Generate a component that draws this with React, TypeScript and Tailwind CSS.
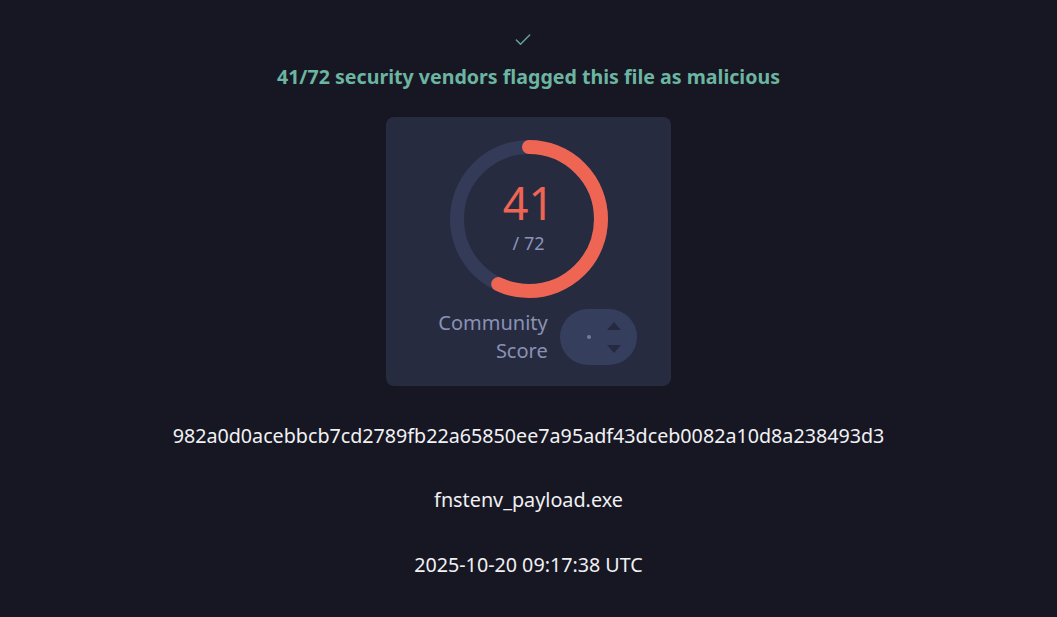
import { Check } from "lucide-react";

const total = 72;
const flagged = 41;

const r = 72;
const circ = 2 * Math.PI * r;

const ScoreRing = () => (
  <div className="relative w-[158px] h-[158px]">
    <svg width="158" height="158" viewBox="0 0 158 158" className="-rotate-90">
      <circle cx="79" cy="79" r={r} fill="none" stroke="#343b58" strokeWidth="14" />
      <circle
        cx="79"
        cy="79"
        r={r}
        fill="none"
        stroke="#ee6554"
        strokeWidth="14"
        strokeLinecap="round"
        strokeDasharray={`${(flagged / total) * circ} ${circ}`}
      />
    </svg>
    <div className="absolute inset-0 flex flex-col items-center pt-[38px]">
      <span className="text-[45px] leading-[50px] text-[#ee6554]">{flagged}</span>
      <span className="mt-[3px] text-[18px] leading-[24px] text-[#8c95b8]">/ {total}</span>
    </div>
  </div>
);

const Votes = () => (
  <div className="w-[77px] h-[56px] rounded-full bg-[#363e5e] flex items-center pl-[27px] gap-[16px]">
    <span className="w-[4px] h-[4px] rounded-full bg-[#727b9c]" />
    <div className="flex flex-col gap-[15px]">
      <span className="w-0 h-0 border-x-[7.5px] border-x-transparent border-b-[8px] border-b-[#252a40]" />
      <span className="w-0 h-0 border-x-[7.5px] border-x-transparent border-t-[8px] border-t-[#252a40]" />
    </div>
  </div>
);

export default function App() {
  return (
    <div className="min-h-screen bg-[#171724] flex flex-col items-center pt-[30px] font-['Noto_Sans',sans-serif]">
      <Check size={20} strokeWidth={1.75} className="text-[#6aa29c] ml-[-12px]" />
      <h1 className="mt-[13px] text-[19.6px] leading-[28px] font-bold text-[#6cb5a0]">
        41/72 security vendors flagged this file as malicious
      </h1>

      <div className="mt-[26px] w-[285px] h-[269px] rounded-lg bg-[#262b40] flex flex-col items-center pt-[23px]">
        <ScoreRing />
        <div className="mt-[11px] ml-[18px] flex items-center gap-[12px]">
          <div className="text-right text-[20px] leading-[28px] text-[#8a92b4]">
            Community
            <br />
            Score
          </div>
          <Votes />
        </div>
      </div>

      <p className="mt-[36px] text-[19.7px] leading-[28px] text-[#f1f1f3]">
        982a0d0acebbcb7cd2789fb22a65850ee7a95adf43dceb0082a10d8a238493d3
      </p>
      <p className="mt-[36px] text-[19.8px] leading-[28px] text-[#f1f1f3]">fnstenv_payload.exe</p>
      <p className="mt-[37px] text-[19.7px] leading-[28px] text-[#f1f1f3]">2025-10-20 09:17:38 UTC</p>
    </div>
  );
}
